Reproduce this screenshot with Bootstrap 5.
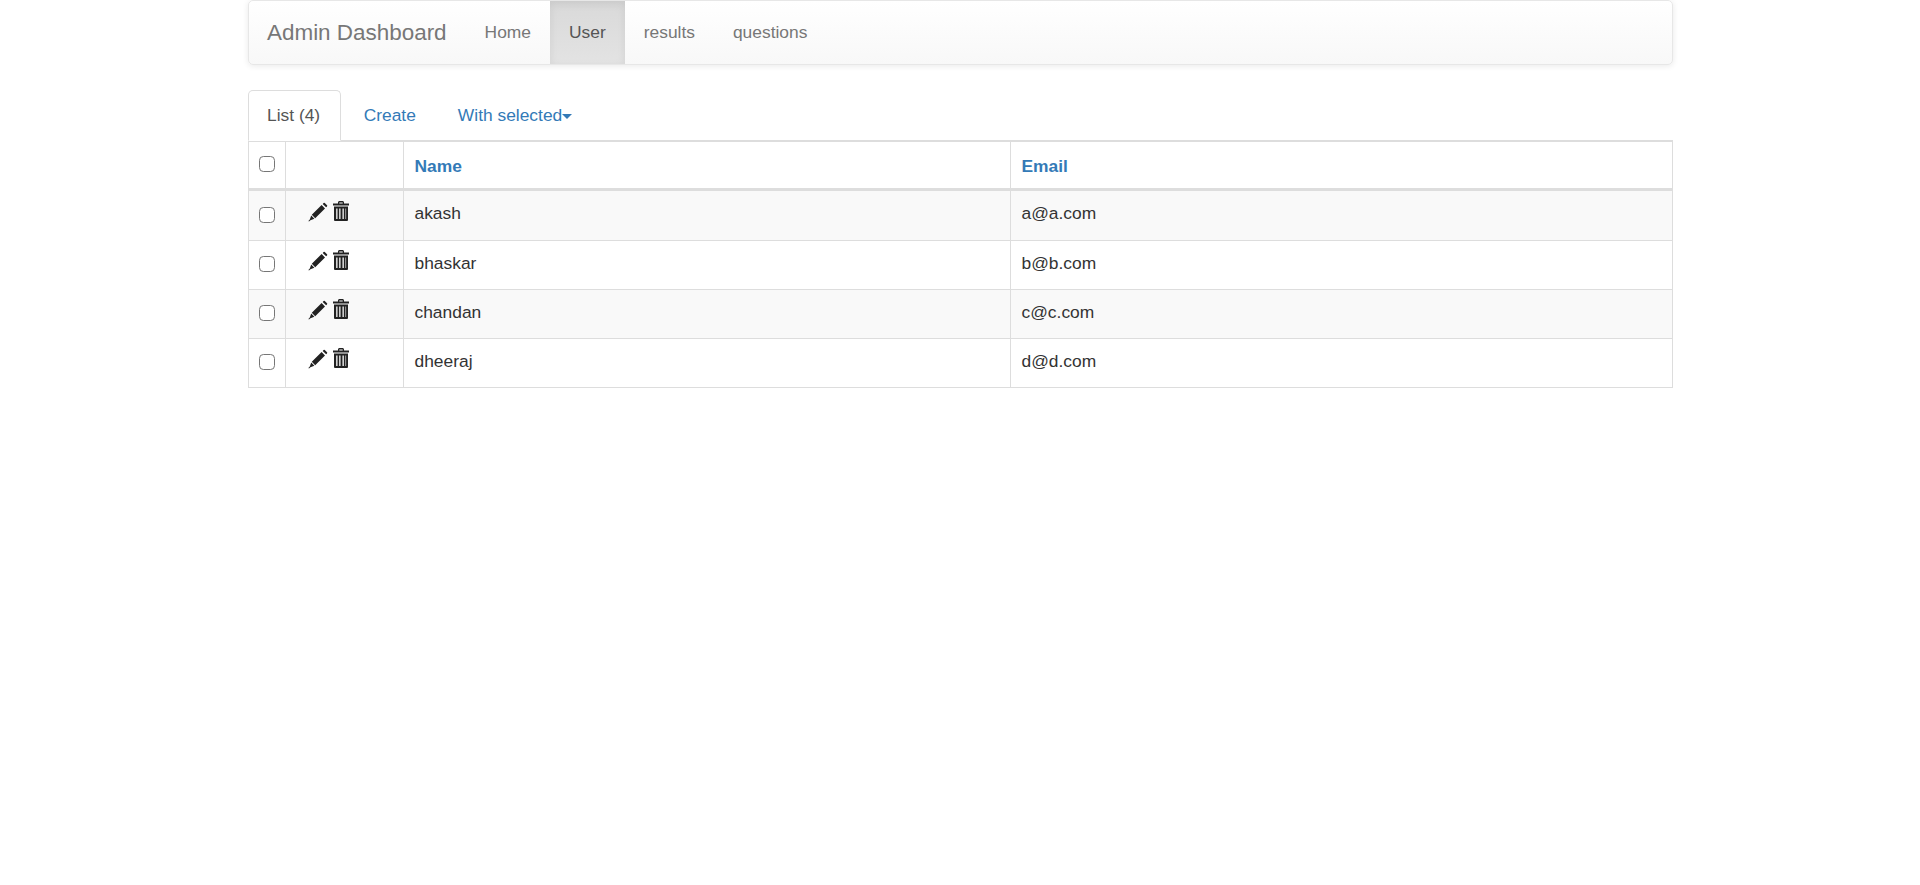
<!DOCTYPE html>
<html lang="en">
<head>
<meta charset="utf-8">
<title>Admin Dashboard</title>
<link href="https://cdn.jsdelivr.net/npm/bootstrap@5.3.0/dist/css/bootstrap.min.css" rel="stylesheet">
<style>
body{font-family:"Liberation Sans",Arial,sans-serif;font-size:17.4px;line-height:24px;color:#333;background:#fff}
.page-wrap{width:1425px;margin-left:248px}
.top-bar{height:65px;padding:0;background:linear-gradient(to bottom,#fff,#f8f8f8);border:1px solid #e7e7e7;border-radius:5px;box-shadow:0 1px 6px rgba(0,0,0,.09);margin-bottom:25px;justify-content:flex-start;flex-wrap:nowrap}
.top-bar .navbar-brand{font-size:22.45px;line-height:26px;color:#777;padding:0 19px 0 18px;margin:0}
.navbar-expand.top-bar .navbar-nav .nav-link{color:#777;padding:0 19px;height:63px;line-height:63px;font-size:17.4px}
.navbar-expand.top-bar .navbar-nav .nav-item.on .nav-link{color:#555;background:linear-gradient(to bottom,#d9d9d9,#e3e3e3);box-shadow:inset 0 3px 9px rgba(0,0,0,.075)}
.tab-row{border-bottom:1px solid #ddd;height:51px}
.tab-row .nav-link{color:#337ab7;padding:12px 18px 0;height:51px;border:1px solid transparent;border-radius:5px 5px 0 0;margin:0 4px 0 0;font-size:17.4px;line-height:24px}
.tab-row .nav-link.active{color:#555;background:#fff;border-color:#ddd #ddd #fff;padding-right:19.5px}
.caret-down{display:inline-block;width:0;height:0;border-top:5px solid #337ab7;border-left:5px solid transparent;border-right:5px solid transparent;vertical-align:middle}
.data-grid{--bs-table-striped-bg:#f9f9f9;--bs-table-border-color:#ddd;--bs-table-color:#333;--bs-table-striped-color:#333;border-color:#ddd;margin:0;table-layout:fixed;border-top:0}
.data-grid tr{border-color:#ddd}
.data-grid th,.data-grid td{padding:10px 10.5px 14px;line-height:24px;font-size:17.4px;border-color:#ddd;vertical-align:top}
.data-grid thead th{border-bottom:3px solid #ddd;padding:12px 10.5px 10px;height:48px}
.data-grid thead{border-bottom:0}
.data-grid tbody td{height:49px}
.data-grid tbody tr:first-child td{height:51px}
.data-grid thead a{color:#337ab7;font-weight:700;text-decoration:none}
.data-grid .col-check{width:37px;padding:0;text-align:center;vertical-align:middle}
.data-grid .col-act{width:118px;padding-left:22px;white-space:nowrap}
.data-grid tbody tr:not(:first-child) td.col-act{padding-top:9px}
.col-name{width:607px}
.tick{width:16px;height:16px;margin:0;border:1px solid #767676;border-radius:3px;vertical-align:middle;position:relative;top:-2px}
.act-ico{display:inline-block;vertical-align:top;margin-top:1px}
.act-ico + .act-ico{margin-left:4px;margin-top:0}
.icon-defs{display:none}
</style>
</head>
<body>
<svg class="icon-defs" aria-hidden="true">
  <symbol id="ico-pencil" viewBox="0 0 20 20"><path fill="#222" d="M13.6 3 17 6.4 7.2 16.2 3.8 12.8Z M14.7 1.9l.9-.9a.9.9 0 0 1 1.2 0l2.2 2.2a.9.9 0 0 1 0 1.2l-.9.9Z M3.2 13.6 6.4 16.8 2.4 18.2 1 19.6 .4 19 1.8 17.6Z"/></symbol>
  <symbol id="ico-trash" viewBox="0 0 18 20"><path fill="#222" fill-rule="evenodd" d="M6 1.5C6 .7 6.7 0 7.5 0h3c.8 0 1.5.7 1.5 1.5V2.5h5v2H1v-2h5Zm1.3 1h3.4V1.4H7.3Z M2 5.5h14V19a1 1 0 0 1-1 1H3a1 1 0 0 1-1-1Zm2.2 2V18h1.3V7.5Zm3 0V18h1.3V7.5Zm3.3 0V18h1.3V7.5Zm3 0V18h.6V7.5Z"/></symbol>
</svg>
<div class="page-wrap">
<nav class="navbar navbar-expand top-bar">
  <a class="navbar-brand" href="#">Admin Dashboard</a>
  <ul class="navbar-nav">
    <li class="nav-item"><a class="nav-link" href="#">Home</a></li>
    <li class="nav-item on"><a class="nav-link" href="#">User</a></li>
    <li class="nav-item"><a class="nav-link" href="#">results</a></li>
    <li class="nav-item"><a class="nav-link" href="#">questions</a></li>
  </ul>
</nav>
<ul class="nav nav-tabs tab-row">
  <li class="nav-item"><a class="nav-link active" href="#">List (4)</a></li>
  <li class="nav-item"><a class="nav-link" href="#">Create</a></li>
  <li class="nav-item"><a class="nav-link" href="#">With selected<span class="caret-down"></span></a></li>
</ul>
<table class="table table-bordered table-striped data-grid">
  <thead>
    <tr>
      <th class="col-check"><input class="form-check-input tick" type="checkbox" aria-label="Select all"></th>
      <th class="col-act"></th>
      <th class="col-name"><a href="#">Name</a></th>
      <th><a href="#">Email</a></th>
    </tr>
  </thead>
  <tbody>
    <tr>
      <td class="col-check"><input class="form-check-input tick" type="checkbox" aria-label="Select"></td>
      <td class="col-act"><svg class="act-ico" width="20" height="20" aria-hidden="true"><use href="#ico-pencil"/></svg><svg class="act-ico" width="18" height="20" aria-hidden="true"><use href="#ico-trash"/></svg></td>
      <td>akash</td><td>a@a.com</td>
    </tr>
    <tr>
      <td class="col-check"><input class="form-check-input tick" type="checkbox" aria-label="Select"></td>
      <td class="col-act"><svg class="act-ico" width="20" height="20" aria-hidden="true"><use href="#ico-pencil"/></svg><svg class="act-ico" width="18" height="20" aria-hidden="true"><use href="#ico-trash"/></svg></td>
      <td>bhaskar</td><td>b@b.com</td>
    </tr>
    <tr>
      <td class="col-check"><input class="form-check-input tick" type="checkbox" aria-label="Select"></td>
      <td class="col-act"><svg class="act-ico" width="20" height="20" aria-hidden="true"><use href="#ico-pencil"/></svg><svg class="act-ico" width="18" height="20" aria-hidden="true"><use href="#ico-trash"/></svg></td>
      <td>chandan</td><td>c@c.com</td>
    </tr>
    <tr>
      <td class="col-check"><input class="form-check-input tick" type="checkbox" aria-label="Select"></td>
      <td class="col-act"><svg class="act-ico" width="20" height="20" aria-hidden="true"><use href="#ico-pencil"/></svg><svg class="act-ico" width="18" height="20" aria-hidden="true"><use href="#ico-trash"/></svg></td>
      <td>dheeraj</td><td>d@d.com</td>
    </tr>
  </tbody>
</table>
</div>
<script src="https://cdn.jsdelivr.net/npm/bootstrap@5.3.0/dist/js/bootstrap.bundle.min.js"></script>
</body>
</html>
